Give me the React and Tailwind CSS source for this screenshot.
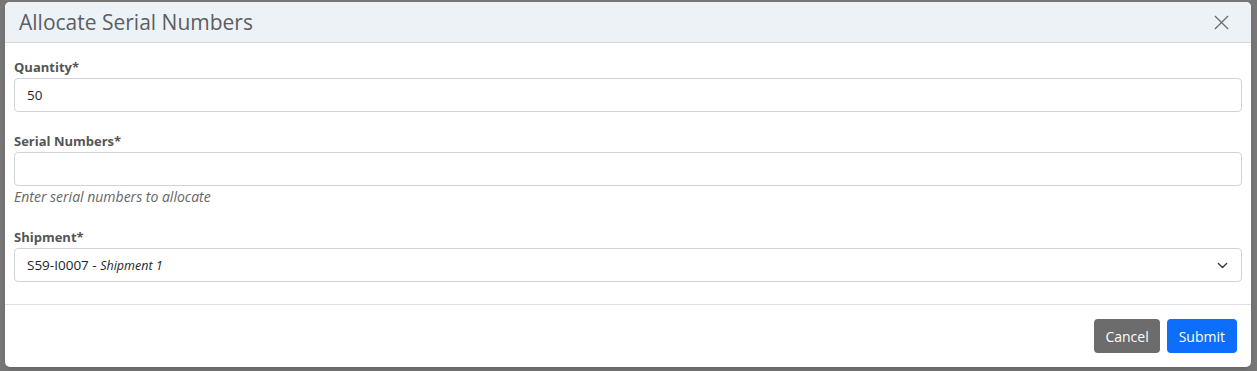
import React from 'react';

const font = { fontFamily: '"Open Sans", "Noto Sans", sans-serif' };

function Field({ label, children, help }) {
  return (
    <div className="flex flex-col">
      <label className="text-[13px] font-bold text-[#555] leading-[18px] mb-[2px]">{label}</label>
      {children}
      {help && <div className="text-[14px] italic text-[#666] leading-[18px] mt-[2px] mb-[2px]">{help}</div>}
    </div>
  );
}

export default function App() {
  return (
    <div className="w-[1257px] h-[371px] bg-[#777] overflow-hidden pt-[2px] pl-[5px]" style={font}>
      <div className="w-[1246px] h-[365px] bg-white rounded-[5px] shadow-md flex flex-col overflow-hidden">
        {/* header */}
        <div className="h-[41px] bg-[#edf2f7] border-b border-[#d4d8dd] flex items-center justify-between pl-[14px] pr-[22px] shrink-0">
          <h1 className="text-[21px] font-medium text-[#5b5e62] leading-none">Allocate Serial Numbers</h1>
          <button className="text-[#6b6f73]">
            <svg width="15" height="15" viewBox="0 0 16 16" fill="none" stroke="currentColor" strokeWidth="1.4">
              <path d="M1 1L15 15M15 1L1 15" />
            </svg>
          </button>
        </div>

        {/* body */}
        <div className="flex flex-col gap-[20px] px-[9px] pt-[15px] pb-[22px] border-b border-[#dee2e6]">
          <Field label="Quantity*">
            <div className="h-[34px] border border-[#ced4da] rounded-[4px] flex items-center px-[12px] text-[13.5px] text-[#212529]">
              50
            </div>
          </Field>
          <Field label="Serial Numbers*" help="Enter serial numbers to allocate">
            <div className="h-[34px] border border-[#ced4da] rounded-[4px]" />
          </Field>
          <Field label="Shipment*">
            <div className="h-[34px] border border-[#ced4da] rounded-[4px] flex items-center justify-between pl-[12px] pr-[13px] text-[13.5px] text-[#212529]">
              <span>
                S59-I0007 - <span className="italic text-[12.5px]">Shipment 1</span>
              </span>
              <svg width="11" height="11" viewBox="0 0 16 16" fill="none" stroke="#343a40" strokeWidth="2" strokeLinecap="round" strokeLinejoin="round">
                <path d="M2 5l6 6 6-6" />
              </svg>
            </div>
          </Field>
        </div>

        {/* footer */}
        <div className="flex-1 flex items-center justify-end gap-[7px] pr-[14px]">
          <button className="h-[34px] px-[11px] rounded-[4px] bg-[#6c6c6c] text-white text-[14px]">Cancel</button>
          <button className="h-[34px] px-[12px] rounded-[4px] bg-[#0d6efd] text-white text-[14px]">Submit</button>
        </div>
      </div>
    </div>
  );
}
